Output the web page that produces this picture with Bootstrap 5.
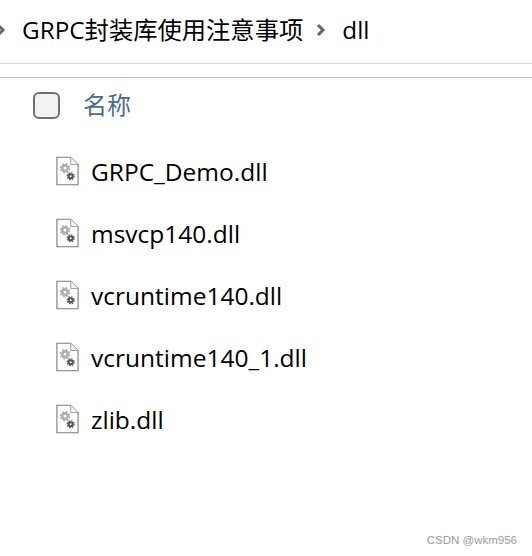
<!DOCTYPE html>
<html lang="zh">
<head>
  <meta charset="UTF-8">
  <meta name="viewport" content="width=device-width, initial-scale=1">
  <title>dll</title>
  <link href="https://cdn.jsdelivr.net/npm/bootstrap@5.3.0/dist/css/bootstrap.min.css" rel="stylesheet">
  <style>
    html, body { height: 100%; }
    body {
      background: #fff;
      color: #000;
      font-family: "Open Sans", "Noto Sans CJK SC", sans-serif;
      overflow: hidden;
    }
    .shot { height: 556px; }
    .crumbs { height: 60px; margin-bottom: 3px; font-size: 24.3px; line-height: 36px; }
    .crumb-sep { width: 10px; height: 14px; flex: none; color: #666; }
    .crumb-first { margin-left: -3px; margin-right: 15px; }
    .crumb-mid { margin-left: 13px; margin-right: 16px; }
    .rule-a { height: 1px; background: #d6d6d6; }
    .rule-gap { height: 13px; }
    .rule-b { height: 1px; background: #bdbdbd; }
    .head-row { height: 54px; padding-left: 33px; }
    .check-box {
      width: 27px; height: 27px;
      border: 2px solid #707070;
      border-radius: 6px;
      background: #f3f3f3;
    }
    .head-name { margin-left: 23px; font-size: 24px; color: #4d6a92; }
    .files { padding-left: 56px; padding-top: 9px; }
    .file-row { height: 62px; font-size: 24.5px; gap: 12px; }
    .file-icon { width: 23px; height: 30px; flex: none; margin-bottom: 3px; }
    .mark-text {
      right: 15px; bottom: 7px;
      font-size: 11.5px; color: #9a9a9a;
      font-family: "Liberation Sans", sans-serif;
    }
  </style>
</head>
<body>
  <svg width="0" height="0" class="position-absolute">
    <symbol id="dll" viewBox="0 0 25 32">
      <path d="M1 1H16L24 9V31H1Z" fill="#fff" stroke="#7c7c7c" stroke-width="1.2"/>
      <path d="M16 1V9H24" fill="#f2f2f2" stroke="#9a9a9a" stroke-width="1"/>
      <circle cx="9.8" cy="13" r="3" fill="none" stroke="#adb0b4" stroke-width="3"/>
      <circle cx="9.8" cy="13" r="5" fill="none" stroke="#adb0b4" stroke-width="1.6" stroke-dasharray="2 1.93"/>
      <circle cx="16" cy="21.7" r="2.2" fill="none" stroke="#50555a" stroke-width="2.2"/>
      <circle cx="16" cy="21.7" r="3.8" fill="none" stroke="#50555a" stroke-width="1.3" stroke-dasharray="1.6 1.38"/>
    </symbol>
  </svg>

  <div class="shot position-relative">
    <div class="crumbs d-flex align-items-center">
      <svg class="crumb-sep crumb-first" viewBox="0 0 10 14"><path d="M1 2l5 5-5 5" fill="none" stroke="currentColor" stroke-width="3"/></svg>
      <span>GRPC封装库使用注意事项</span>
      <svg class="crumb-sep crumb-mid" viewBox="0 0 10 14"><path d="M2 2l5 5-5 5" fill="none" stroke="currentColor" stroke-width="3"/></svg>
      <span>dll</span>
    </div>
    <div class="rule-a"></div>
    <div class="rule-gap"></div>
    <div class="rule-b"></div>
    <div class="head-row d-flex align-items-center">
      <div class="check-box"></div>
      <div class="head-name">名称</div>
    </div>
    <div class="files">
      <div class="file-row d-flex align-items-center"><svg class="file-icon"><use href="#dll"/></svg><span>GRPC_Demo.dll</span></div>
      <div class="file-row d-flex align-items-center"><svg class="file-icon"><use href="#dll"/></svg><span>msvcp140.dll</span></div>
      <div class="file-row d-flex align-items-center"><svg class="file-icon"><use href="#dll"/></svg><span>vcruntime140.dll</span></div>
      <div class="file-row d-flex align-items-center"><svg class="file-icon"><use href="#dll"/></svg><span>vcruntime140_1.dll</span></div>
      <div class="file-row d-flex align-items-center"><svg class="file-icon"><use href="#dll"/></svg><span>zlib.dll</span></div>
    </div>
    <div class="mark-text position-absolute">CSDN @wkm956</div>
  </div>
  <script src="https://cdn.jsdelivr.net/npm/bootstrap@5.3.0/dist/js/bootstrap.bundle.min.js"></script>
</body>
</html>
